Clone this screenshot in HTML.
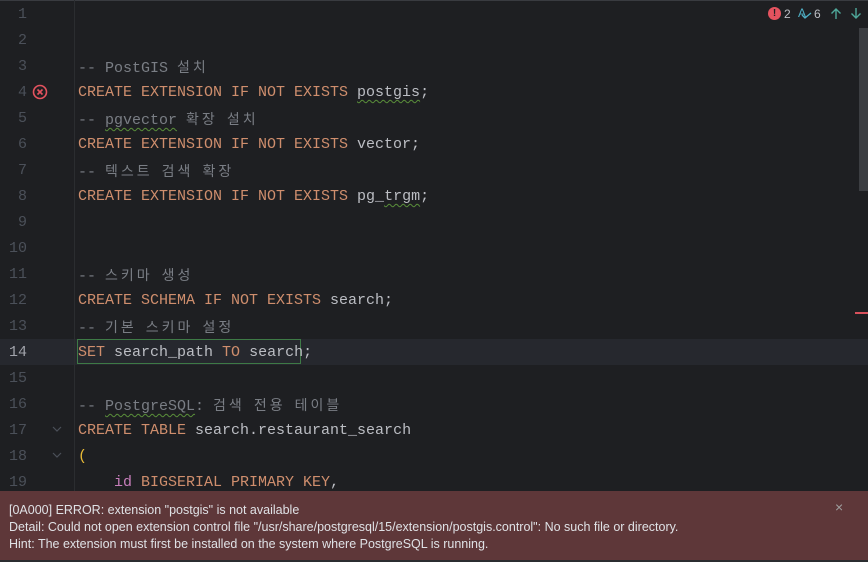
<!DOCTYPE html>
<html><head><meta charset="utf-8"><style>
body{margin:0;width:868px;height:562px;background:#1e1f22;overflow:hidden;position:relative;font-family:"Liberation Mono","Noto Sans CJK KR",monospace;font-size:15px}
.ln{position:absolute;left:0;width:27px;text-align:right;color:#4b5059;height:26px;line-height:26px;margin-top:1px}
.cl{position:absolute;left:78px;height:26px;line-height:26px;white-space:pre;color:#bcbec4;margin-top:1px}
.k{color:#cf8e6d}.c{color:#7a7e85}.ko{letter-spacing:3px;font-family:"Noto Sans CJK KR",sans-serif;font-size:14px}
.w{text-decoration:underline wavy #5a8f3a;text-decoration-thickness:1px;text-underline-offset:3px}
.gut{position:absolute;left:74px;top:0;width:1px;height:491px;background:#2b2d30}
.err{position:absolute;left:0;top:491px;width:868px;height:69px;background:#5e3739;color:#dfe1e5;font-family:"Liberation Sans",sans-serif;font-size:12.5px;line-height:17px;box-sizing:border-box;padding:11px 0 0 9px}
</style></head><body>
<div style="position:absolute;left:0;top:0;width:868px;height:1px;background:#393b40"></div>
<div style="position:absolute;left:0;top:339px;width:868px;height:26px;background:#26282e"></div>
<div class="gut"></div>
<div style="position:absolute;left:77px;top:339px;width:224px;height:25px;border:1px solid #3e7a46;box-sizing:border-box"></div>
<div style="position:absolute;left:859px;top:28px;width:9px;height:163px;background:#3c3e42"></div>
<div style="position:absolute;left:855px;top:312px;width:13px;height:2px;background:#d9515c"></div>

<div class="ln" style="top:1px">1</div><div class="ln" style="top:27px">2</div><div class="ln" style="top:53px">3</div><div class="ln" style="top:79px">4</div><div class="ln" style="top:105px">5</div><div class="ln" style="top:131px">6</div><div class="ln" style="top:157px">7</div><div class="ln" style="top:183px">8</div><div class="ln" style="top:209px">9</div><div class="ln" style="top:235px">10</div><div class="ln" style="top:261px">11</div><div class="ln" style="top:287px">12</div><div class="ln" style="top:313px">13</div><div class="ln" style="top:339px;color:#a1a3ab">14</div><div class="ln" style="top:365px">15</div><div class="ln" style="top:391px">16</div><div class="ln" style="top:417px">17</div><div class="ln" style="top:443px">18</div><div class="ln" style="top:469px">19</div>

<svg style="position:absolute;left:32px;top:84px" width="16" height="16" viewBox="0 0 16 16"><circle cx="8" cy="8" r="6.5" fill="none" stroke="#e5535f" stroke-width="1.6"/><path d="M5.5 5.5L10.5 10.5M10.5 5.5L5.5 10.5" stroke="#e5535f" stroke-width="1.6"/></svg>
<svg style="position:absolute;left:52px;top:425px" width="10" height="8"><path d="M1 2l4 4 4-4" fill="none" stroke="#4b5059" stroke-width="1.2"/></svg>
<svg style="position:absolute;left:52px;top:451px" width="10" height="8"><path d="M1 2l4 4 4-4" fill="none" stroke="#4b5059" stroke-width="1.2"/></svg>

<div class="cl c" style="top:53px">-- PostGIS <span class="ko">설치</span></div>
<div class="cl" style="top:79px"><span class="k">CREATE EXTENSION IF NOT EXISTS </span><span class="w">postgis</span>;</div>
<div class="cl c" style="top:105px">-- <span class="w">pgvector</span> <span class="ko">확장</span> <span class="ko">설치</span></div>
<div class="cl" style="top:131px"><span class="k">CREATE EXTENSION IF NOT EXISTS </span>vector;</div>
<div class="cl c" style="top:157px">-- <span class="ko">텍스트</span> <span class="ko">검색</span> <span class="ko">확장</span></div>
<div class="cl" style="top:183px"><span class="k">CREATE EXTENSION IF NOT EXISTS </span>pg_<span class="w">trgm</span>;</div>
<div class="cl c" style="top:261px">-- <span class="ko">스키마</span> <span class="ko">생성</span></div>
<div class="cl" style="top:287px"><span class="k">CREATE SCHEMA IF NOT EXISTS </span>search;</div>
<div class="cl c" style="top:313px">-- <span class="ko">기본</span> <span class="ko">스키마</span> <span class="ko">설정</span></div>
<div class="cl" style="top:339px"><span class="k">SET </span>search_path <span class="k">TO </span>search;</div>
<div class="cl c" style="top:391px">-- <span class="w">PostgreSQL</span>: <span class="ko">검색</span> <span class="ko">전용</span> <span class="ko">테이블</span></div>
<div class="cl" style="top:417px"><span class="k">CREATE TABLE </span>search.restaurant_search</div>
<div class="cl" style="top:443px;color:#e8ba36">(</div>
<div class="cl" style="top:469px">    <span style="color:#c77dbb">id </span><span class="k">BIGSERIAL PRIMARY KEY</span>,</div>

<div style="position:absolute;left:768px;top:7px;width:13px;height:13px;border-radius:50%;background:#e5535f;color:#1e1f22;font:bold 10px/13px 'Liberation Sans',sans-serif;text-align:center">!</div>
<div style="position:absolute;left:784px;top:6px;color:#bcbec4;font:12px/16px 'Liberation Sans',sans-serif">2</div>
<div style="position:absolute;left:798px;top:5px;color:#4fb0c6;font:12px/16px 'Liberation Sans',sans-serif">A</div>
<svg style="position:absolute;left:801px;top:12px" width="12" height="8"><path d="M1 3l3 3 6-5" fill="none" stroke="#4fb0c6" stroke-width="1.3"/></svg>
<div style="position:absolute;left:814px;top:6px;color:#bcbec4;font:12px/16px 'Liberation Sans',sans-serif">6</div>
<svg style="position:absolute;left:830px;top:7px" width="12" height="13"><path d="M6 12V2M1.5 6.5L6 2l4.5 4.5" fill="none" stroke="#4fa89a" stroke-width="1.4"/></svg>
<svg style="position:absolute;left:850px;top:7px" width="12" height="13"><path d="M6 1v10M1.5 6.5L6 11l4.5-4.5" fill="none" stroke="#4fa89a" stroke-width="1.4"/></svg>

<div class="err">[0A000] ERROR: extension "postgis" is not available<br>Detail: Could not open extension control file "/usr/share/postgresql/15/extension/postgis.control": No such file or directory.<br>Hint: The extension must first be installed on the system where PostgreSQL is running.
<div style="position:absolute;left:835px;top:8px;color:#a0a0a0;font-size:14px">×</div></div>
<div style="position:absolute;left:0;top:560px;width:868px;height:2px;background:#2b2d30"></div>
</body></html>
